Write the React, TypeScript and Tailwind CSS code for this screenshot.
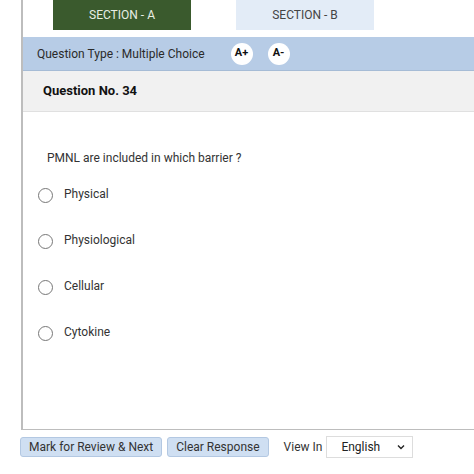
import React from "react";

export default function App() {
  const options = ["Physical", "Physiological", "Cellular", "Cytokine"];
  return (
    <div className="w-[474px] h-[474px] bg-white overflow-hidden text-[#222]" style={{ fontFamily: "Roboto, 'Liberation Sans', sans-serif" }}>
      <div className="ml-[21px] h-[430px] border-l-2 border-b border-[#bdbdbd] flex flex-col">
        <div className="flex h-[30px] pl-[30px] gap-[45px]">
          <div className="w-[138px] h-full bg-[#3a5a2d] text-[#e8eee4] text-[12px] flex items-center justify-center">SECTION - A</div>
          <div className="w-[138px] h-full bg-[#e3ecf7] text-[#444] text-[12px] flex items-center justify-center">SECTION - B</div>
        </div>
        <div className="mt-[7px] h-[34px] bg-[#b7cce6] border-b border-[#a6bcd6] flex items-center pl-[14px]">
          <span className="text-[12px] text-[#2a2a2a]">Question Type : Multiple Choice</span>
          <span className="ml-[26px] w-[22px] h-[22px] rounded-full bg-white text-[11px] font-bold flex items-center justify-center text-[#111]">A+</span>
          <span className="ml-[15px] w-[22px] h-[22px] rounded-full bg-white text-[11px] font-bold flex items-center justify-center text-[#111]">A-</span>
        </div>
        <div className="h-[41px] bg-[#f1f1f1] border-b border-[#e0e0e0] flex items-center pl-[20px]">
          <span className="text-[13px] font-bold text-[#111]">Question No. 34</span>
        </div>
        <div className="pt-[37px] pl-[24px] text-[12px] text-[#333]">PMNL are included in which barrier ?</div>
        <div className="flex flex-col pt-[21px] gap-[31px] pl-[15px]">
          {options.map((o) => (
            <div key={o} className="flex items-center h-[15px]">
              <span className="w-[15px] h-[15px] rounded-full border border-[#777] bg-white" />
              <span className="ml-[11px] text-[12px] text-[#333] -mt-[3px]">{o}</span>
            </div>
          ))}
        </div>
      </div>
      <div className="flex items-center mt-[6px] ml-[20px] h-[22px]">
        <button className="h-[20px] px-[8px] bg-[#cfdff2] border border-[#b3c8e2] rounded-[3px] text-[12px] text-[#333] leading-none">Mark for Review &amp; Next</button>
        <button className="ml-[5px] h-[20px] px-[8px] bg-[#cfdff2] border border-[#b3c8e2] rounded-[3px] text-[12px] text-[#333] leading-none">Clear Response</button>
        <span className="ml-[15px] text-[12px] text-[#333]">View In</span>
        <div className="ml-[4px] w-[87px] h-[22px] border border-[#ddd] bg-white flex items-center pl-[14px] pr-[6px] justify-between">
          <span className="text-[12px] text-[#222]">English</span>
          <svg width="10" height="10" viewBox="0 0 10 10"><path d="M2 3.5 L5 6.5 L8 3.5" stroke="#222" strokeWidth="1.4" fill="none" /></svg>
        </div>
      </div>
    </div>
  );
}
